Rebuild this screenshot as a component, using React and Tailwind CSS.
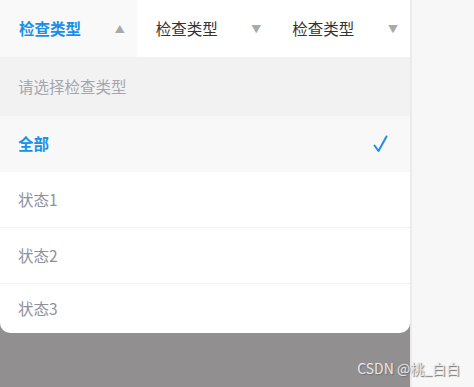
import React from 'react';

const font = { fontFamily: '"Noto Sans CJK SC", "Noto Sans", sans-serif' };

const tabs = [
  { label: '检查类型', open: true },
  { label: '检查类型', open: false },
  { label: '检查类型', open: false },
];

const options = ['状态1', '状态2', '状态3'];

function Tab({ label, open }) {
  return (
    <div className={`flex-1 h-full flex items-center justify-between pl-[19px] pr-[12px] ${open ? 'bg-[#f9f9f9]' : 'bg-white'}`}>
      <span className={`text-[15.5px] ${open ? 'text-[#1890ea] font-bold' : 'text-[#333]'}`}>{label}</span>
      <span className="text-[10px] text-[#a9a9a9]">{open ? '▲' : '▼'}</span>
    </div>
  );
}

export default function App() {
  return (
    <div className="w-[474px] h-[387px] flex bg-[#f7f7f7] overflow-hidden" style={font}>
      <div className="w-[410px] h-full flex flex-col bg-[#918f90]">
        {/* Filter tabs */}
        <div className="h-[57px] flex bg-white">
          {tabs.map((t, i) => <Tab key={i} {...t} />)}
        </div>

        {/* Dropdown */}
        <div className="flex flex-col bg-white rounded-b-[10px] overflow-hidden">
          <div className="h-[59px] flex items-center px-[18px] bg-[#f2f2f2] text-[15.5px] text-[#a3a6ae]">请选择检查类型</div>
          <div className="h-[56px] flex items-center justify-between pl-[18px] pr-[22px] bg-[#f8f8f8]">
            <span className="text-[15.5px] font-bold text-[#1890ea]">全部</span>
            <svg width="15" height="18" viewBox="0 0 15 18" fill="none">
              <path d="M1.5 10.5 L5.5 16 L13.5 1.5" stroke="#1e8ee8" strokeWidth="2" strokeLinecap="round" strokeLinejoin="round" />
            </svg>
          </div>
          {options.map((o, i) => (
            <div key={o} className={`flex items-center px-[18px] text-[15.5px] text-[#8e919b] ${i < options.length - 1 ? 'h-[56px] border-b border-[#f3f3f3]' : 'h-[49px]'}`}>
              {o}
            </div>
          ))}
        </div>
      </div>

      <div className="relative flex-1 h-full border-l-2 border-[#ebebeb] bg-[#f7f7f7]">
        <span
          className="absolute top-[358px] right-[14px] whitespace-nowrap text-[14px] text-[#e8e8e8]"
          style={{ textShadow: '1px 1px 1px #6f6f6f' }}
        >
          CSDN @桃_白白
        </span>
      </div>
    </div>
  );
}
